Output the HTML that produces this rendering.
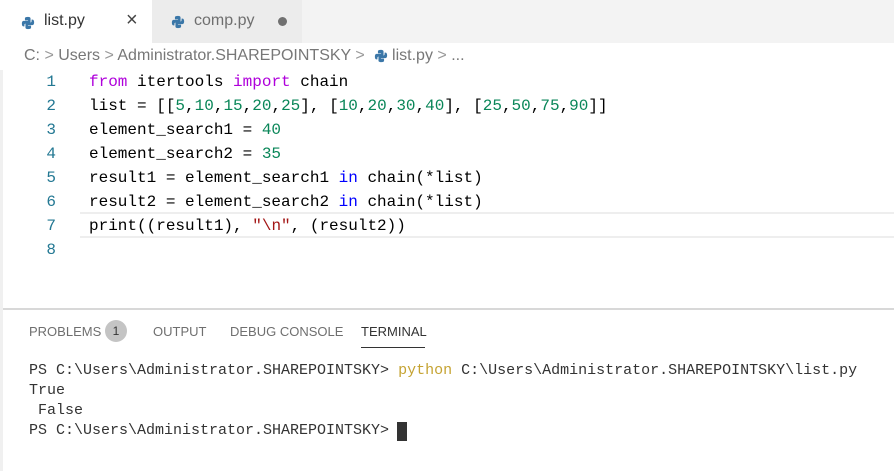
<!DOCTYPE html>
<html><head><style>
body{margin:0;width:894px;height:471px;overflow:hidden;background:#fff;position:relative;font-family:"Liberation Sans",sans-serif}
.abs{position:absolute}
.mono{font-family:"Liberation Mono",monospace;white-space:pre}
.code{font-size:16px;line-height:24px;color:#000}
.ln{color:#237893;font-size:16px;line-height:24px;text-align:right;width:56px}
.k{color:#af00db}.b{color:#0000ff}.n{color:#098658}.s{color:#a31515}
.term{font-size:15px;line-height:20px;color:#333}
.py{display:inline-block;width:14px;height:14px;vertical-align:middle}
</style></head><body>
<div class="abs" style="left:0;top:0;width:894px;height:43px;background:#f3f3f3"></div>
<div class="abs" style="left:0;top:0;width:152px;height:43px;background:#fff"></div>
<div class="abs" style="left:152px;top:0;width:150px;height:43px;background:#ececec"></div>
<div class="abs" style="left:21px;top:14px"><svg class="py" viewBox="0 0 16 16"><path d="M8 1C4 1 4.5 2.8 4.5 2.8V5h3.6v.6H3S1 5.4 1 8.7s1.8 3.2 1.8 3.2h1.1v-1.6s-.1-1.8 1.8-1.8h3.5s1.7 0 1.7-1.7V3S11.2 1 8 1z" fill="#3b77a8"/><path d="M8 15c4 0 3.5-1.8 3.5-1.8V11H7.9v-.6H13s2 .2 2-3.1-1.8-3.2-1.8-3.2h-1.1v1.6s.1 1.8-1.8 1.8H6.8S5.1 7.5 5.1 9.2V13S4.8 15 8 15z" fill="#3b77a8"/></svg></div>
<div class="abs" style="left:44px;top:12px;font-size:16px;color:#333">list.py</div>
<div class="abs" style="left:126px;top:9px;font-size:20px;color:#444">×</div>
<div class="abs" style="left:171px;top:13px"><svg class="py" viewBox="0 0 16 16"><path d="M8 1C4 1 4.5 2.8 4.5 2.8V5h3.6v.6H3S1 5.4 1 8.7s1.8 3.2 1.8 3.2h1.1v-1.6s-.1-1.8 1.8-1.8h3.5s1.7 0 1.7-1.7V3S11.2 1 8 1z" fill="#3b77a8"/><path d="M8 15c4 0 3.5-1.8 3.5-1.8V11H7.9v-.6H13s2 .2 2-3.1-1.8-3.2-1.8-3.2h-1.1v1.6s.1 1.8-1.8 1.8H6.8S5.1 7.5 5.1 9.2V13S4.8 15 8 15z" fill="#3b77a8"/></svg></div>
<div class="abs" style="left:194px;top:12px;font-size:16px;color:#6f6f6f">comp.py</div>
<div class="abs" style="left:278px;top:17px;width:9px;height:9px;border-radius:50%;background:#707070"></div>
<div class="abs" style="left:0;top:70px;width:3px;height:238px;background:#f0f0f0"></div>
<div class="abs" style="left:24px;top:47px;font-size:16px;color:#777;white-space:pre">C: <span style="color:#999">&gt;</span> Users <span style="color:#999">&gt;</span> Administrator.SHAREPOINTSKY <span style="color:#999">&gt;</span>  <svg class="py" viewBox="0 0 16 16" style="width:14px;height:14px"><path d="M8 1C4 1 4.5 2.8 4.5 2.8V5h3.6v.6H3S1 5.4 1 8.7s1.8 3.2 1.8 3.2h1.1v-1.6s-.1-1.8 1.8-1.8h3.5s1.7 0 1.7-1.7V3S11.2 1 8 1z" fill="#3b77a8"/><path d="M8 15c4 0 3.5-1.8 3.5-1.8V11H7.9v-.6H13s2 .2 2-3.1-1.8-3.2-1.8-3.2h-1.1v1.6s.1 1.8-1.8 1.8H6.8S5.1 7.5 5.1 9.2V13S4.8 15 8 15z" fill="#3b77a8"/></svg> list.py <span style="color:#999">&gt;</span> ...</div>
<div class="abs" style="left:80px;top:212px;width:814px;height:22px;border-top:2px solid #eee;border-bottom:2px solid #eee"></div>
<div class="abs mono ln" style="left:0;top:70px">1
2
3
4
5
6
7
8</div>
<div class="abs mono code" style="left:89px;top:70px"><span class="k">from</span> itertools <span class="k">import</span> chain
list = [[<span class="n">5</span>,<span class="n">10</span>,<span class="n">15</span>,<span class="n">20</span>,<span class="n">25</span>], [<span class="n">10</span>,<span class="n">20</span>,<span class="n">30</span>,<span class="n">40</span>], [<span class="n">25</span>,<span class="n">50</span>,<span class="n">75</span>,<span class="n">90</span>]]
element_search1 = <span class="n">40</span>
element_search2 = <span class="n">35</span>
result1 = element_search1 <span class="b">in</span> chain(*list)
result2 = element_search2 <span class="b">in</span> chain(*list)
print((result1), <span class="s">"\n"</span>, (result2))
</div>
<div class="abs" style="left:3px;top:308px;width:891px;height:2px;background:#d8d8d8"></div>
<div class="abs" style="left:0;top:308px;width:3px;height:163px;background:#f0f0f0"></div>
<div class="abs" style="left:29px;top:324px;font-size:13px;color:#6f6f6f;white-space:pre">PROBLEMS</div>
<div class="abs" style="left:105px;top:320px;width:22px;height:22px;border-radius:50%;background:#c4c4c4;color:#333;font-size:12px;text-align:center;line-height:22px">1</div>
<div class="abs" style="left:153px;top:324px;font-size:13px;color:#6f6f6f">OUTPUT</div>
<div class="abs" style="left:230px;top:324px;font-size:13px;color:#6f6f6f">DEBUG CONSOLE</div>
<div class="abs" style="left:361px;top:324px;font-size:13px;color:#333">TERMINAL</div>
<div class="abs" style="left:361px;top:347px;width:64px;height:1px;background:#333"></div>
<div class="abs mono term" style="left:29px;top:361px">PS C:\Users\Administrator.SHAREPOINTSKY&gt; <span style="color:#c5a332">python</span> C:\Users\Administrator.SHAREPOINTSKY\list.py
True
 False
PS C:\Users\Administrator.SHAREPOINTSKY&gt; </div>
<div class="abs" style="left:397px;top:422px;width:10px;height:19px;background:#333"></div>
</body></html>
